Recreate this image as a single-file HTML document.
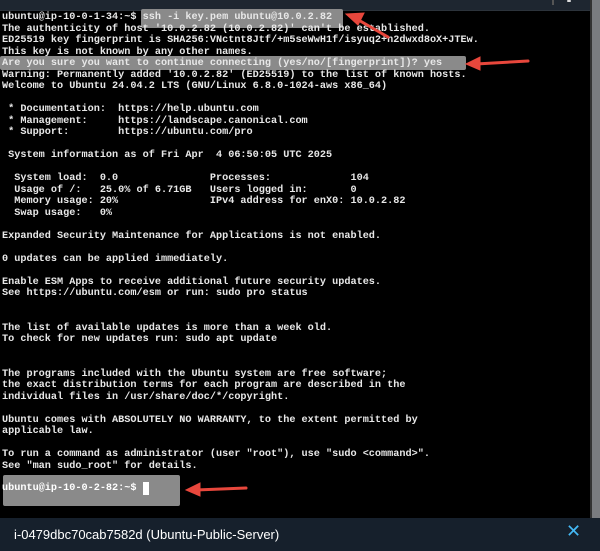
<!DOCTYPE html>
<html><head><style>
body{margin:0;width:600px;height:551px;background:#000;overflow:hidden;position:relative;font-family:"Liberation Mono",monospace}
.top{position:absolute;left:0;top:0;width:600px;height:10px;background:#1e2630;border-bottom:1px solid #2c333b}
.term{position:absolute;left:0;top:11px;width:590px;height:507px;background:#000}
.rb{position:absolute;left:590px;top:0;width:10px;height:518px;background:#7a7c80;border-left:2px solid #333}
pre{position:absolute;left:2px;top:12px;margin:0;font-size:10.2px;line-height:11.5px;color:#e8e8e8;font-weight:bold;font-family:"Liberation Mono",monospace}
.hl{position:absolute;background:#8a8a8a;border-radius:2px}
.bot{position:absolute;left:0;top:518px;width:600px;height:33px;background:#16202c;color:#fff;font-family:"Liberation Sans",sans-serif;font-size:13px}
</style></head><body>
<div class="top"><div style="position:absolute;left:552px;top:0;width:2px;height:5px;background:#555"></div><div style="position:absolute;left:567px;top:0;width:4px;height:2px;background:#ddd;border-radius:2px"></div></div>
<div class="term"></div>
<div class="rb"></div>
<div class="hl" style="left:141px;top:9px;width:202px;height:19px"></div>
<div class="hl" style="left:0;top:56px;width:466px;height:14px"></div>
<div class="hl" style="left:3px;top:475px;width:177px;height:31px"></div>
<pre>ubuntu@ip-10-0-1-34:~$ ssh -i key.pem ubuntu@10.0.2.82
The authenticity of host '10.0.2.82 (10.0.2.82)' can't be established.
ED25519 key fingerprint is SHA256:VNctnt8Jtf/+m5seWwH1f/isyuq2+n2dwxd8oX+JTEw.
This key is not known by any other names.
Are you sure you want to continue connecting (yes/no/[fingerprint])? yes
Warning: Permanently added '10.0.2.82' (ED25519) to the list of known hosts.
Welcome to Ubuntu 24.04.2 LTS (GNU/Linux 6.8.0-1024-aws x86_64)

 * Documentation:  https://help.ubuntu.com
 * Management:     https://landscape.canonical.com
 * Support:        https://ubuntu.com/pro

 System information as of Fri Apr  4 06:50:05 UTC 2025

  System load:  0.0               Processes:             104
  Usage of /:   25.0% of 6.71GB   Users logged in:       0
  Memory usage: 20%               IPv4 address for enX0: 10.0.2.82
  Swap usage:   0%

Expanded Security Maintenance for Applications is not enabled.

0 updates can be applied immediately.

Enable ESM Apps to receive additional future security updates.
See https://ubuntu.com/esm or run: sudo pro status


The list of available updates is more than a week old.
To check for new updates run: sudo apt update


The programs included with the Ubuntu system are free software;
the exact distribution terms for each program are described in the
individual files in /usr/share/doc/*/copyright.

Ubuntu comes with ABSOLUTELY NO WARRANTY, to the extent permitted by
applicable law.

To run a command as administrator (user "root"), use "sudo &lt;command&gt;".
See "man sudo_root" for details.
</pre>
<div style="position:absolute;left:2px;top:483px;font-size:10.2px;color:#fff;font-weight:bold">ubuntu@ip-10-0-2-82:~$ </div>
<div style="position:absolute;left:143px;top:482px;width:6px;height:13px;background:#fff"></div>
<svg style="position:absolute;left:0;top:0" width="600" height="518">
<g stroke="#e8473c" stroke-width="3" stroke-linecap="round" fill="#e8473c">
<line x1="388" y1="37" x2="355" y2="18"/><polygon points="346,14 364,13 358,25" stroke-width="1"/>
<line x1="528" y1="61" x2="476" y2="64"/><polygon points="466,64 480,57 480,70" stroke-width="1"/>
<line x1="246" y1="488" x2="196" y2="490"/><polygon points="186,490 200,483 200,496" stroke-width="1"/>
</g></svg>
<div class="bot"><div style="position:absolute;left:14px;top:9px">i-0479dbc70cab7582d (Ubuntu-Public-Server)</div>
<div style="position:absolute;left:566px;top:3px;color:#44b9f5;font-size:18px">✕</div></div>
</body></html>
